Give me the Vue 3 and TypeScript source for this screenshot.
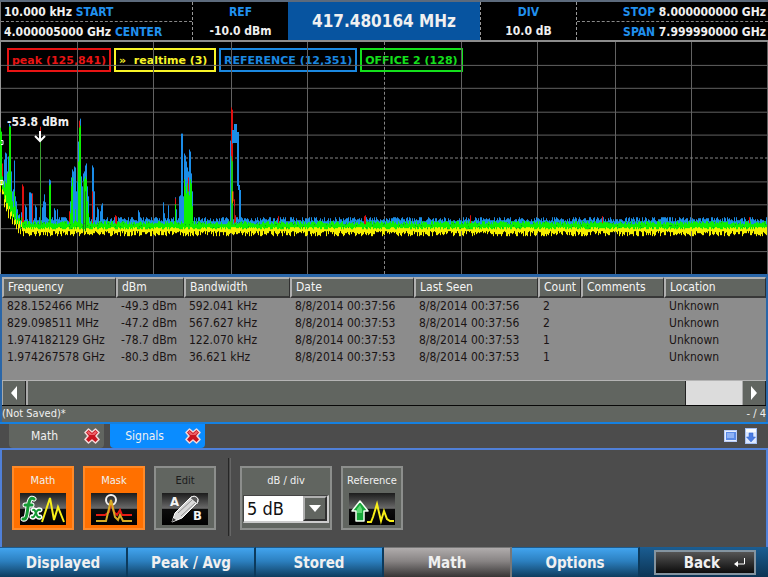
<script setup lang="ts">
import { computed, ref } from 'vue'

interface Signal {
  frequency: string
  level: string
  bandwidth: string
  date: string
  lastSeen: string
  count: number
  comments: string
  location: string
}

interface Trace {
  label: string
  tone: string
}

const traces: Trace[] = [
  { label: 'peak (125,841)', tone: 'red' },
  { label: '»  realtime (3)', tone: 'yellow' },
  { label: 'REFERENCE (12,351)', tone: 'blue' },
  { label: 'OFFICE 2 (128)', tone: 'green' },
]

const columns = ['Frequency', 'dBm', 'Bandwidth', 'Date', 'Last Seen', 'Count', 'Comments', 'Location']

const signals: Signal[] = [
  { frequency: '828.152466 MHz', level: '-49.3 dBm', bandwidth: '592.041 kHz', date: '8/8/2014 00:37:56', lastSeen: '8/8/2014 00:37:56', count: 2, comments: '', location: 'Unknown' },
  { frequency: '829.098511 MHz', level: '-47.2 dBm', bandwidth: '567.627 kHz', date: '8/8/2014 00:37:53', lastSeen: '8/8/2014 00:37:56', count: 2, comments: '', location: 'Unknown' },
  { frequency: '1.974182129 GHz', level: '-78.7 dBm', bandwidth: '122.070 kHz', date: '8/8/2014 00:37:53', lastSeen: '8/8/2014 00:37:53', count: 1, comments: '', location: 'Unknown' },
  { frequency: '1.974267578 GHz', level: '-80.3 dBm', bandwidth: '36.621 kHz', date: '8/8/2014 00:37:53', lastSeen: '8/8/2014 00:37:53', count: 1, comments: '', location: 'Unknown' },
]

const tabs = ['Math', 'Signals']
const activeTab = ref('Signals')

const menu = ['Displayed', 'Peak / Avg', 'Stored', 'Math', 'Options']
const activeMenu = ref('Math')

const scale = ref('5 dB')
const scales = ['1 dB', '2 dB', '5 dB', '10 dB']

/* Graticule: ten divisions each way, the middle ones dashed */
const gridX = [77, 153, 231, 307, 461, 537, 615, 691, 767]
const gridY = [23, 46, 70, 93, 140, 163, 187, 210]

/* Small repeatable noise source so the floor looks the same on every load */
function noise(seed: number): () => number {
  let s = seed
  return () => {
    s = (s * 1664525 + 1013904223) % 4294967296
    return s / 4294967296
  }
}

/* Peaks: x, top */
const bluePeaks: Record<number, number> = {
  4: 118, 5: 111, 6: 112, 7: 130, 8: 115, 9: 82, 10: 84, 11: 130, 12: 150, 13: 148, 14: 119, 15: 155, 16: 160, 17: 168,
  22: 162, 23: 160, 25: 164, 26: 166, 29: 151, 30: 151, 31: 152, 32: 158, 35: 164, 36: 166, 42: 166, 43: 160, 44: 153, 45: 161,
  49: 138, 50: 139, 54: 167, 55: 169, 57: 168, 70: 160, 71: 136, 72: 128, 73: 130, 74: 125, 75: 126, 76: 150, 77: 140, 78: 100, 79: 80, 80: 77, 81: 135,
  82: 145, 83: 132, 84: 130, 85: 124, 86: 122, 87: 145, 88: 155, 92: 124, 93: 126, 94: 150, 97: 166, 98: 168, 100: 170, 101: 164, 102: 162,
  138: 169, 139: 171, 163: 161, 164: 172, 168: 164, 175: 156, 176: 168, 179: 155, 180: 154, 181: 92, 182: 92, 183: 155, 184: 112, 185: 114,
  186: 120, 187: 126, 188: 130, 189: 108, 190: 110, 191: 132, 192: 150, 230: 99, 231: 98,
}
const greenPeaks: Record<number, number> = {
  0: 86, 1: 90, 2: 135, 3: 140, 4: 146, 5: 140, 6: 142, 7: 132, 8: 130, 9: 85, 10: 85, 11: 150, 12: 160, 13: 166, 14: 150, 15: 165,
  40: 96, 49: 144, 50: 143, 70: 172, 71: 145, 72: 136, 75: 168, 78: 120, 79: 86, 80: 84, 84: 137, 85: 135, 86: 138, 87: 160, 88: 172,
  175: 163, 184: 138, 185: 145, 186: 152, 187: 142, 188: 150, 189: 154, 190: 138, 191: 142, 192: 165, 231: 115, 232: 120,
}
const redPeaks: Record<number, number> = {
  2: 122, 5: 142, 12: 165, 22: 143, 23: 145, 32: 152, 40: 85, 69: 170, 79: 79, 92: 150, 115: 174, 116: 175, 175: 157, 188: 136,
  231: 66, 232: 68, 234: 158, 235: 174, 278: 175, 364: 175, 365: 174, 470: 174, 602: 175, 749: 176,
}

function floorShift(x: number): number {
  if (x < 22) return Math.round(((22 - x) / 22) ** 2 * 44) + [0, 5, 2, 7][(x * 3) % 4]
  return 0
}

function bars(seed: number, top: number, bottom: number, jitterTop: number, jitterBottom: number, peaks: Record<number, number>): string {
  const rnd = noise(seed)
  let d = ''
  for (let x = 0; x < 767; x++) {
    const shift = floorShift(x)
    const base = top - shift - Math.floor(rnd() * jitterTop)
    const end = bottom - shift + Math.floor(rnd() * jitterBottom)
    const start = peaks[x] !== undefined ? Math.min(peaks[x], base) : base
    d += `M${x + 0.5} ${start}V${end}`
  }
  return d
}

function peakBars(peaks: Record<number, number>): string {
  return Object.entries(peaks)
    .map(([x, y]) => `M${Number(x) + 0.5} ${y}V${Math.min(184, y + 88) - floorShift(Number(x))}`)
    .join('')
}

const bluePath = computed(() => bars(7, 180, 184, 5, 2, bluePeaks))
const greenPath = computed(() => bars(19, 183, 188, 4, 3, greenPeaks))
const yellowPath = computed(() => bars(41, 188, 190, 3, 6, {}))
const redPath = computed(() => peakBars(redPeaks))
const specklePath = computed(() => {
  const rnd = noise(83)
  let d = ''
  for (let x = 18; x < 766; x++) {
    if (rnd() > 0.72) d += `M${x + 0.5} ${180 + Math.floor(rnd() * 9)}v1`
  }
  return d
})
</script>

<template>
  <div class="analyzer">
    <header class="readout">
      <div class="cell pair">
        <p>10.000 kHz <span>START</span></p>
        <p>4.000005000 GHz <span>CENTER</span></p>
      </div>
      <div class="cell mid">
        <p><span>REF</span></p>
        <p>-10.0 dBm</p>
      </div>
      <h1 class="tuned">417.480164 MHz</h1>
      <div class="cell mid">
        <p><span>DIV</span></p>
        <p>10.0 dB</p>
      </div>
      <div class="cell pair right">
        <p><span>STOP</span> 8.000000000 GHz</p>
        <p><span>SPAN</span> 7.999990000 GHz</p>
      </div>
    </header>

    <section class="plot" aria-label="Spectrum">
      <ul class="legend">
        <li v-for="t in traces" :key="t.label" :class="t.tone">{{ t.label }}</li>
      </ul>
      <svg class="graph" viewBox="0 0 768 233" preserveAspectRatio="none" shape-rendering="crispEdges" aria-hidden="true">
        <g stroke="#626262" stroke-width="1">
          <line v-for="x in gridX" :key="'x' + x" :x1="x + 0.5" :x2="x + 0.5" y1="0" y2="233" />
          <line v-for="y in gridY" :key="'y' + y" x1="0" x2="768" :y1="y + 0.5" :y2="y + 0.5" />
          <path d="M384.5 0V233" stroke="#858585" stroke-dasharray="3 2" />
          <path d="M0 116.500H768" stroke="#858585" stroke-dasharray="3 2" />
          <path d="M0.5 0V233" stroke="#9a9a9a" />
        </g>
        <g fill="none" stroke-width="1">
          <path :d="bluePath" stroke="#1b8de8" />
          <path :d="redPath" stroke="#e01010" />
          <path :d="greenPath" stroke="#0cf000" />
          <path :d="specklePath" stroke="#0a8a2c" />
          <path :d="yellowPath" stroke="#f6f000" />
          <path d="M231.500 102L232.500 99L233.500 88L234.500 99L235.500 82L236.500 96L237.500 90L238 104L238 142L239.500 148L240 180" stroke="#1b8de8" stroke-width="2" />
          <path d="M231 98H238" stroke="#1b8de8" stroke-width="7" />
          <path d="M231.500 66V115M232.500 102V114" stroke="#e01010" />
          <path d="M231.500 115V184M232.500 120V184" stroke="#18c818" />
          <path d="M232.500 150V162" stroke="#d8a000" />
          <path d="M233.500 150V160M234.500 165V178" stroke="#901818" />
          <path d="M40.500 99V184" stroke="#35a02e" />
          <path d="M83.500 140V190M85.500 150V190" stroke="#187a1c" />
        </g>
        <g fill="none" stroke="#fff">
          <path d="M1 99h2v4h-2M0 139h3v4h-3z" />
        </g>
      </svg>
      <div class="marker">
        <span>-53.8 dBm</span>
        <svg width="12" height="13" viewBox="0 0 12 13" aria-hidden="true">
          <path d="M6 1V10M1 6L6 11L11 6" fill="none" stroke="#fff" stroke-width="2" />
        </svg>
      </div>
    </section>

    <section class="signals" aria-label="Signals">
      <table>
        <colgroup>
          <col class="c-freq" /><col class="c-dbm" /><col class="c-band" /><col class="c-date" />
          <col class="c-date" /><col class="c-count" /><col class="c-comm" /><col />
        </colgroup>
        <thead>
          <tr><th v-for="c in columns" :key="c" scope="col">{{ c }}</th></tr>
        </thead>
        <tbody>
          <tr v-for="s in signals" :key="s.frequency">
            <td>{{ s.frequency }}</td>
            <td>{{ s.level }}</td>
            <td>{{ s.bandwidth }}</td>
            <td>{{ s.date }}</td>
            <td>{{ s.lastSeen }}</td>
            <td>{{ s.count }}</td>
            <td>{{ s.comments }}</td>
            <td>{{ s.location }}</td>
          </tr>
        </tbody>
      </table>
      <div class="scroller">
        <button type="button" aria-label="Scroll left">
          <svg width="8" height="14" viewBox="0 0 8 14"><path d="M7 0V14L1 7z" fill="#fff" /></svg>
        </button>
        <div class="track"><div class="thumb"></div></div>
        <button type="button" aria-label="Scroll right">
          <svg width="8" height="14" viewBox="0 0 8 14"><path d="M1 0V14L7 7z" fill="#fff" /></svg>
        </button>
      </div>
      <div class="status"><span>(Not Saved)*</span><span>- / 4</span></div>
    </section>

    <nav class="tabs" aria-label="Panels">
      <div v-for="t in tabs" :key="t" class="tab" :class="{ active: t === activeTab }">
        <button type="button" class="tab-name" @click="activeTab = t">{{ t }}</button>
        <button type="button" class="close" :aria-label="'Close ' + t">
          <svg width="16" height="16" viewBox="0 0 16 16">
            <path d="M4.500 1L8 4L11.500 1L15 4.500L12 8L15 11.500L11.500 15L8 12L4.500 15L1 11.500L4 8L1 4.500z" fill="#c81420" stroke="#f4dada" stroke-width="1.500" stroke-linejoin="round" />
            <path d="M4.500 3L8 6L11.500 3L13 4.500L10.500 7H5.500L3 4.500z" fill="#ee6068" />
          </svg>
        </button>
      </div>
      <div class="window-tools">
        <button type="button" aria-label="Show window">
          <svg width="14" height="14" viewBox="0 0 14 14">
            <rect x="0.500" y="1.500" width="12" height="11" fill="#e6eeff" stroke="#b8ccf8" />
            <rect x="2" y="3" width="10" height="8" fill="#5a8ae8" />
            <rect x="3" y="4" width="7" height="5" fill="#8eb2f6" />
          </svg>
        </button>
        <button type="button" aria-label="Collapse window">
          <svg width="12" height="16" viewBox="0 0 12 16">
            <rect x="0.500" y="0.500" width="11" height="15" fill="#dce8ff" stroke="#a8c2f4" />
            <rect x="1" y="1" width="10" height="3" fill="#f8fbff" />
            <path d="M4 5H8V9H10.500L6 14L1.500 9H4z" fill="#4a7ce4" stroke="#2f60c8" stroke-width="0.500" />
          </svg>
        </button>
      </div>
    </nav>

    <main class="tools">
      <button type="button" class="tool on">
        <span>Math</span>
        <svg width="46" height="32" viewBox="0 0 46 32" aria-hidden="true">
          <defs>
            <linearGradient id="glass" x1="0" y1="0" x2="0" y2="1">
              <stop offset="0" stop-color="#1c1c1c" />
              <stop offset="0.480" stop-color="#6a6a6a" />
              <stop offset="0.500" stop-color="#0c0c0c" />
              <stop offset="1" stop-color="#000" />
            </linearGradient>
          </defs>
          <rect width="46" height="32" fill="url(#glass)" />
          <path d="M22 29L30 5L34 27L38 14L44 29" fill="none" stroke="#f8ee18" stroke-width="2" />
          <g fill="none" stroke-linecap="round" stroke-linejoin="round">
            <g stroke="#fff" stroke-width="5">
              <path d="M14 6C10 3 9 9 8 14C7 20 7 27 3 26M5 12H12M13 17C16 15 16 26 20 24M20 17C16 15 15 26 12 24" />
            </g>
            <g stroke="#159a35" stroke-width="3">
              <path d="M14 6C10 3 9 9 8 14C7 20 7 27 3 26M5 12H12" />
              <path d="M13 17C16 15 16 26 20 24M20 17C16 15 15 26 12 24" stroke-width="2" />
            </g>
          </g>
        </svg>
      </button>
      <button type="button" class="tool on">
        <span>Mask</span>
        <svg width="46" height="32" viewBox="0 0 46 32" aria-hidden="true">
          <rect width="46" height="32" fill="url(#glass)" />
          <g fill="none">
            <circle cx="20" cy="7" r="5" stroke="#f2f2f2" stroke-width="2" />
            <path d="M5 22H14L18 19L20 8L23 19L26 22L29 17L31 22H41" stroke="#e81c14" stroke-width="2" />
            <path d="M5 28H15L20 7L24 24L27 27L29 22L32 28H41" stroke="#d8ac24" stroke-width="2" />
          </g>
        </svg>
      </button>
      <button type="button" class="tool dim">
        <span>Edit</span>
        <svg width="46" height="32" viewBox="0 0 46 32" aria-hidden="true">
          <rect width="46" height="32" fill="url(#glass)" />
          <path d="M10 29L13 20L29 4Q34 2 36 6L36 9L20 25z" fill="#d8d8d8" stroke="#fff" />
          <path d="M28 5L35 11L36 6Q33 1 28 5z" fill="#585858" stroke="#eee" />
          <path d="M16 20L30 7M19 23L33 10" stroke="#909090" fill="none" />
          <path d="M10 29L11 25L14 27z" fill="#333" />
          <text x="8" y="13" class="glyph">A</text>
          <text x="31" y="27" class="glyph">B</text>
        </svg>
      </button>

      <div class="divider"></div>

      <div class="scale">
        <label for="scale">dB / div</label>
        <div class="combo">
          <select id="scale" v-model="scale">
            <option v-for="s in scales" :key="s">{{ s }}</option>
          </select>
          <span class="drop" aria-hidden="true">
            <svg width="12" height="7" viewBox="0 0 12 7"><path d="M0 0H12L6 7z" fill="#fff" /></svg>
          </span>
        </div>
      </div>

      <button type="button" class="tool">
        <span>Reference</span>
        <svg width="46" height="32" viewBox="0 0 46 32" aria-hidden="true">
          <rect width="46" height="32" fill="url(#glass)" />
          <path d="M3 18L11 8L19 18H15V28H7V18z" fill="#18a83a" stroke="#f4fff4" stroke-width="1.500" stroke-linejoin="round" />
          <path d="M8 16L11 12L13 16V20H8z" fill="#5cd874" />
          <path d="M18 29H22L24 24L28 11L32 28L35 18L38 26L41 28H45" fill="none" stroke="#f8ee18" stroke-width="2" />
        </svg>
      </button>
    </main>

    <nav class="menu" aria-label="Main menu">
      <button v-for="m in menu" :key="m" type="button" :class="{ current: m === activeMenu }" @click="activeMenu = m">{{ m }}</button>
      <div class="back-slot">
        <button type="button" class="back">
          Back
          <svg width="12" height="10" viewBox="0 0 12 10" aria-hidden="true">
            <path d="M10.500 0V6H2" fill="none" stroke="#fff" stroke-width="1" />
            <path d="M0 6L4 3V9z" fill="#fff" />
          </svg>
        </button>
      </div>
    </nav>
  </div>
</template>

<style>
body {
  background: #4c4c4c;
}
</style>

<style scoped>
.analyzer {
  display: flex;
  flex-direction: column;
  min-height: 100vh;
  font-family: "DejaVu Sans Condensed", "DejaVu Sans", sans-serif;
  font-size: 12px;
  color: #f0f0f0;
  background: #4c4c4c;
}

.analyzer * {
  box-sizing: border-box;
}

p, h1, ul {
  margin: 0;
  padding: 0;
}

button {
  font: inherit;
  color: inherit;
  border: 0;
  padding: 0;
  background: none;
}

svg {
  display: block;
}

/* Header */
.readout {
  display: grid;
  grid-template-columns: 2fr 1fr 2fr 1fr 2fr;
  border-top: 2px solid #5c6a7c;
  border-bottom: 2px solid #8c8c8c;
  background: #000;
  font-weight: bold;
}

.readout p {
  height: 19px;
  line-height: 20px;
  white-space: nowrap;
}

.readout span {
  color: #2090ee;
}

.pair {
  padding: 0 2px 0 3px;
  border-left: 1px solid #777;
}

.pair p + p {
  border-top: 1px dashed #888;
  margin: 0 -2px 0 -3px;
  padding: 0 2px 0 3px;
}

.right {
  text-align: right;
  border-left: 1px dashed #999;
}

.mid {
  text-align: center;
  border-left: 1px dashed #999;
}

.tuned {
  display: flex;
  align-items: center;
  justify-content: center;
  background: #0754a0;
  font-size: 17px;
}

/* Spectrum */
.plot {
  position: relative;
  flex: 1 0 232px;
  background: #000;
}

.graph {
  position: absolute;
  inset: 0;
  width: 100%;
  height: 100%;
  pointer-events: none;
}

.legend {
  display: flex;
  gap: 3px;
  padding: 6px 7px;
  list-style: none;
  font-family: "DejaVu Sans", sans-serif;
  font-size: 11px;
  font-weight: bold;
}

.legend li {
  min-width: 102px;
  height: 24px;
  padding: 0 3px;
  border: 2px solid;
  line-height: 22px;
  white-space: pre;
}

.red { color: #e81414; }
.yellow { color: #f8f428; }
.blue { color: #1b88e0; }
.green { color: #14e01c; }

.marker {
  position: absolute;
  left: 7px;
  top: 72px;
  font-weight: bold;
}

.marker span {
  display: block;
  line-height: 16px;
}

.marker svg {
  margin-left: 27px;
}

/* Signal list */
.signals {
  border: solid #2a66a8;
  border-width: 3px 2px 0;
  background: #8c8c8c;
}

table {
  width: 100%;
  table-layout: fixed;
  border-collapse: separate;
  border-spacing: 0;
  margin-bottom: 14px;
  color: #1a1414;
}

.c-freq { width: 114px; }
.c-dbm { width: 68px; }
.c-band { width: 106px; }
.c-date { width: 124px; }
.c-count { width: 43px; }
.c-comm { width: 83px; }

th {
  height: 21px;
  padding: 0 0 0 4px;
  border: solid;
  border-width: 2px 1px 2px 2px;
  border-color: #b0b0b0 #303030 #383838 #b0b0b0;
  background: #616560;
  color: #f4f4f4;
  font-weight: normal;
  line-height: 17px;
  text-align: left;
}

td {
  height: 17px;
  padding: 0 0 0 5px;
  line-height: 17px;
  white-space: nowrap;
}

.scroller {
  display: flex;
  height: 26px;
  border-top: 1px solid #b4b4b4;
  border-bottom: 1px solid #080808;
  background: #616560;
}

.scroller button {
  display: grid;
  place-items: center;
  width: 24px;
  border-left: 1px solid #aaa;
  border-right: 1px solid #222;
}

.track {
  display: flex;
  flex: 1;
  justify-content: flex-end;
  border-left: 2px solid #aaa;
}

.thumb {
  width: 8%;
  background: #dcdcdc;
  border-left: 1px solid #222;
}

.status {
  display: flex;
  justify-content: space-between;
  background: #616560;
  font-size: 11px;
  line-height: 16px;
}

/* Panel tabs */
.tabs {
  display: flex;
  gap: 6px;
  padding: 0 11px 0 9px;
  border-top: 2px solid #1580e0;
  border-bottom: 2px solid #5080d8;
}

.tab {
  display: flex;
  align-items: center;
  gap: 21px;
  width: 95px;
  height: 24px;
  padding-right: 4px;
  border-radius: 0 0 4px 4px;
  background: #616560;
}

.tab.active {
  background: #0a8cff;
}

.tab-name {
  flex: 1;
  text-align: right;
}

.tab:first-child {
  gap: 26px;
}

.window-tools {
  display: flex;
  align-items: center;
  gap: 7px;
  margin-left: auto;
}

/* Tool panel */
.tools {
  display: flex;
  align-items: flex-start;
  gap: 9px;
  height: 97px;
  padding: 16px 10px;
  border-left: 2px solid #5080d8;
  border-right: 2px solid #5080d8;
  font-size: 11px;
}

.tool, .scale {
  display: flex;
  flex-direction: column;
  align-items: center;
  height: 64px;
  padding-top: 6px;
  border: 2px solid #8c8e8c;
  background: #616560;
}

.tool {
  width: 62px;
  gap: 5px;
}

.tool.on {
  border-color: #ff8a28;
  background: #ff7000;
}

.tool.dim {
  color: #1c1c1c;
}

.tool span, .scale label {
  line-height: 14px;
  white-space: nowrap;
}

.glyph {
  fill: #f4f4f4;
  font-size: 13px;
  font-weight: bold;
}

.divider {
  width: 3px;
  height: 78px;
  margin: -8px 0 0 3px;
  border-left: 1px solid #262626;
  border-right: 1px solid #666;
}

.scale {
  width: 92px;
  gap: 7px;
}

.combo {
  display: flex;
  position: relative;
  width: 86px;
  height: 28px;
  border: solid;
  border-width: 1px 2px 2px 1px;
  border-color: #444 #ccc #ccc #444;
}

.combo select {
  appearance: none;
  width: 100%;
  padding: 0 0 0 3px;
  border: 0;
  border-radius: 0;
  background: #fff;
  color: #111;
  font-family: inherit;
  font-size: 18px;
}

.drop {
  position: absolute;
  top: 0;
  right: 0;
  bottom: 0;
  display: grid;
  place-items: center;
  width: 24px;
  border: 2px solid;
  border-color: #b0b0b0 #303030 #303030 #b0b0b0;
  background: #616560;
  pointer-events: none;
}

/* Bottom menu */
.menu {
  display: grid;
  grid-template-columns: repeat(6, 1fr);
  height: 30px;
  font-size: 15px;
  font-weight: bold;
}

.menu > button, .back-slot {
  border-top: 1px solid #1c5c90;
  border-right: 2px solid #0c3a5c;
  background: linear-gradient(#42a4ee, #2c80c0 45%, #0e3c5e);
}

.menu > .current {
  border-color: #777;
  background: linear-gradient(#b0acac, #888484 45%, #363434);
}

.back-slot {
  padding: 2px 12px 2px 14px;
  border-right: 0;
  background: linear-gradient(#1a5c90, #0c3454);
}

.back {
  display: flex;
  align-items: center;
  justify-content: flex-end;
  gap: 14px;
  width: 100%;
  height: 100%;
  padding-right: 8px;
  border: 2px solid #8494a0;
  background: linear-gradient(#555, #0c0c0c);
}
</style>
